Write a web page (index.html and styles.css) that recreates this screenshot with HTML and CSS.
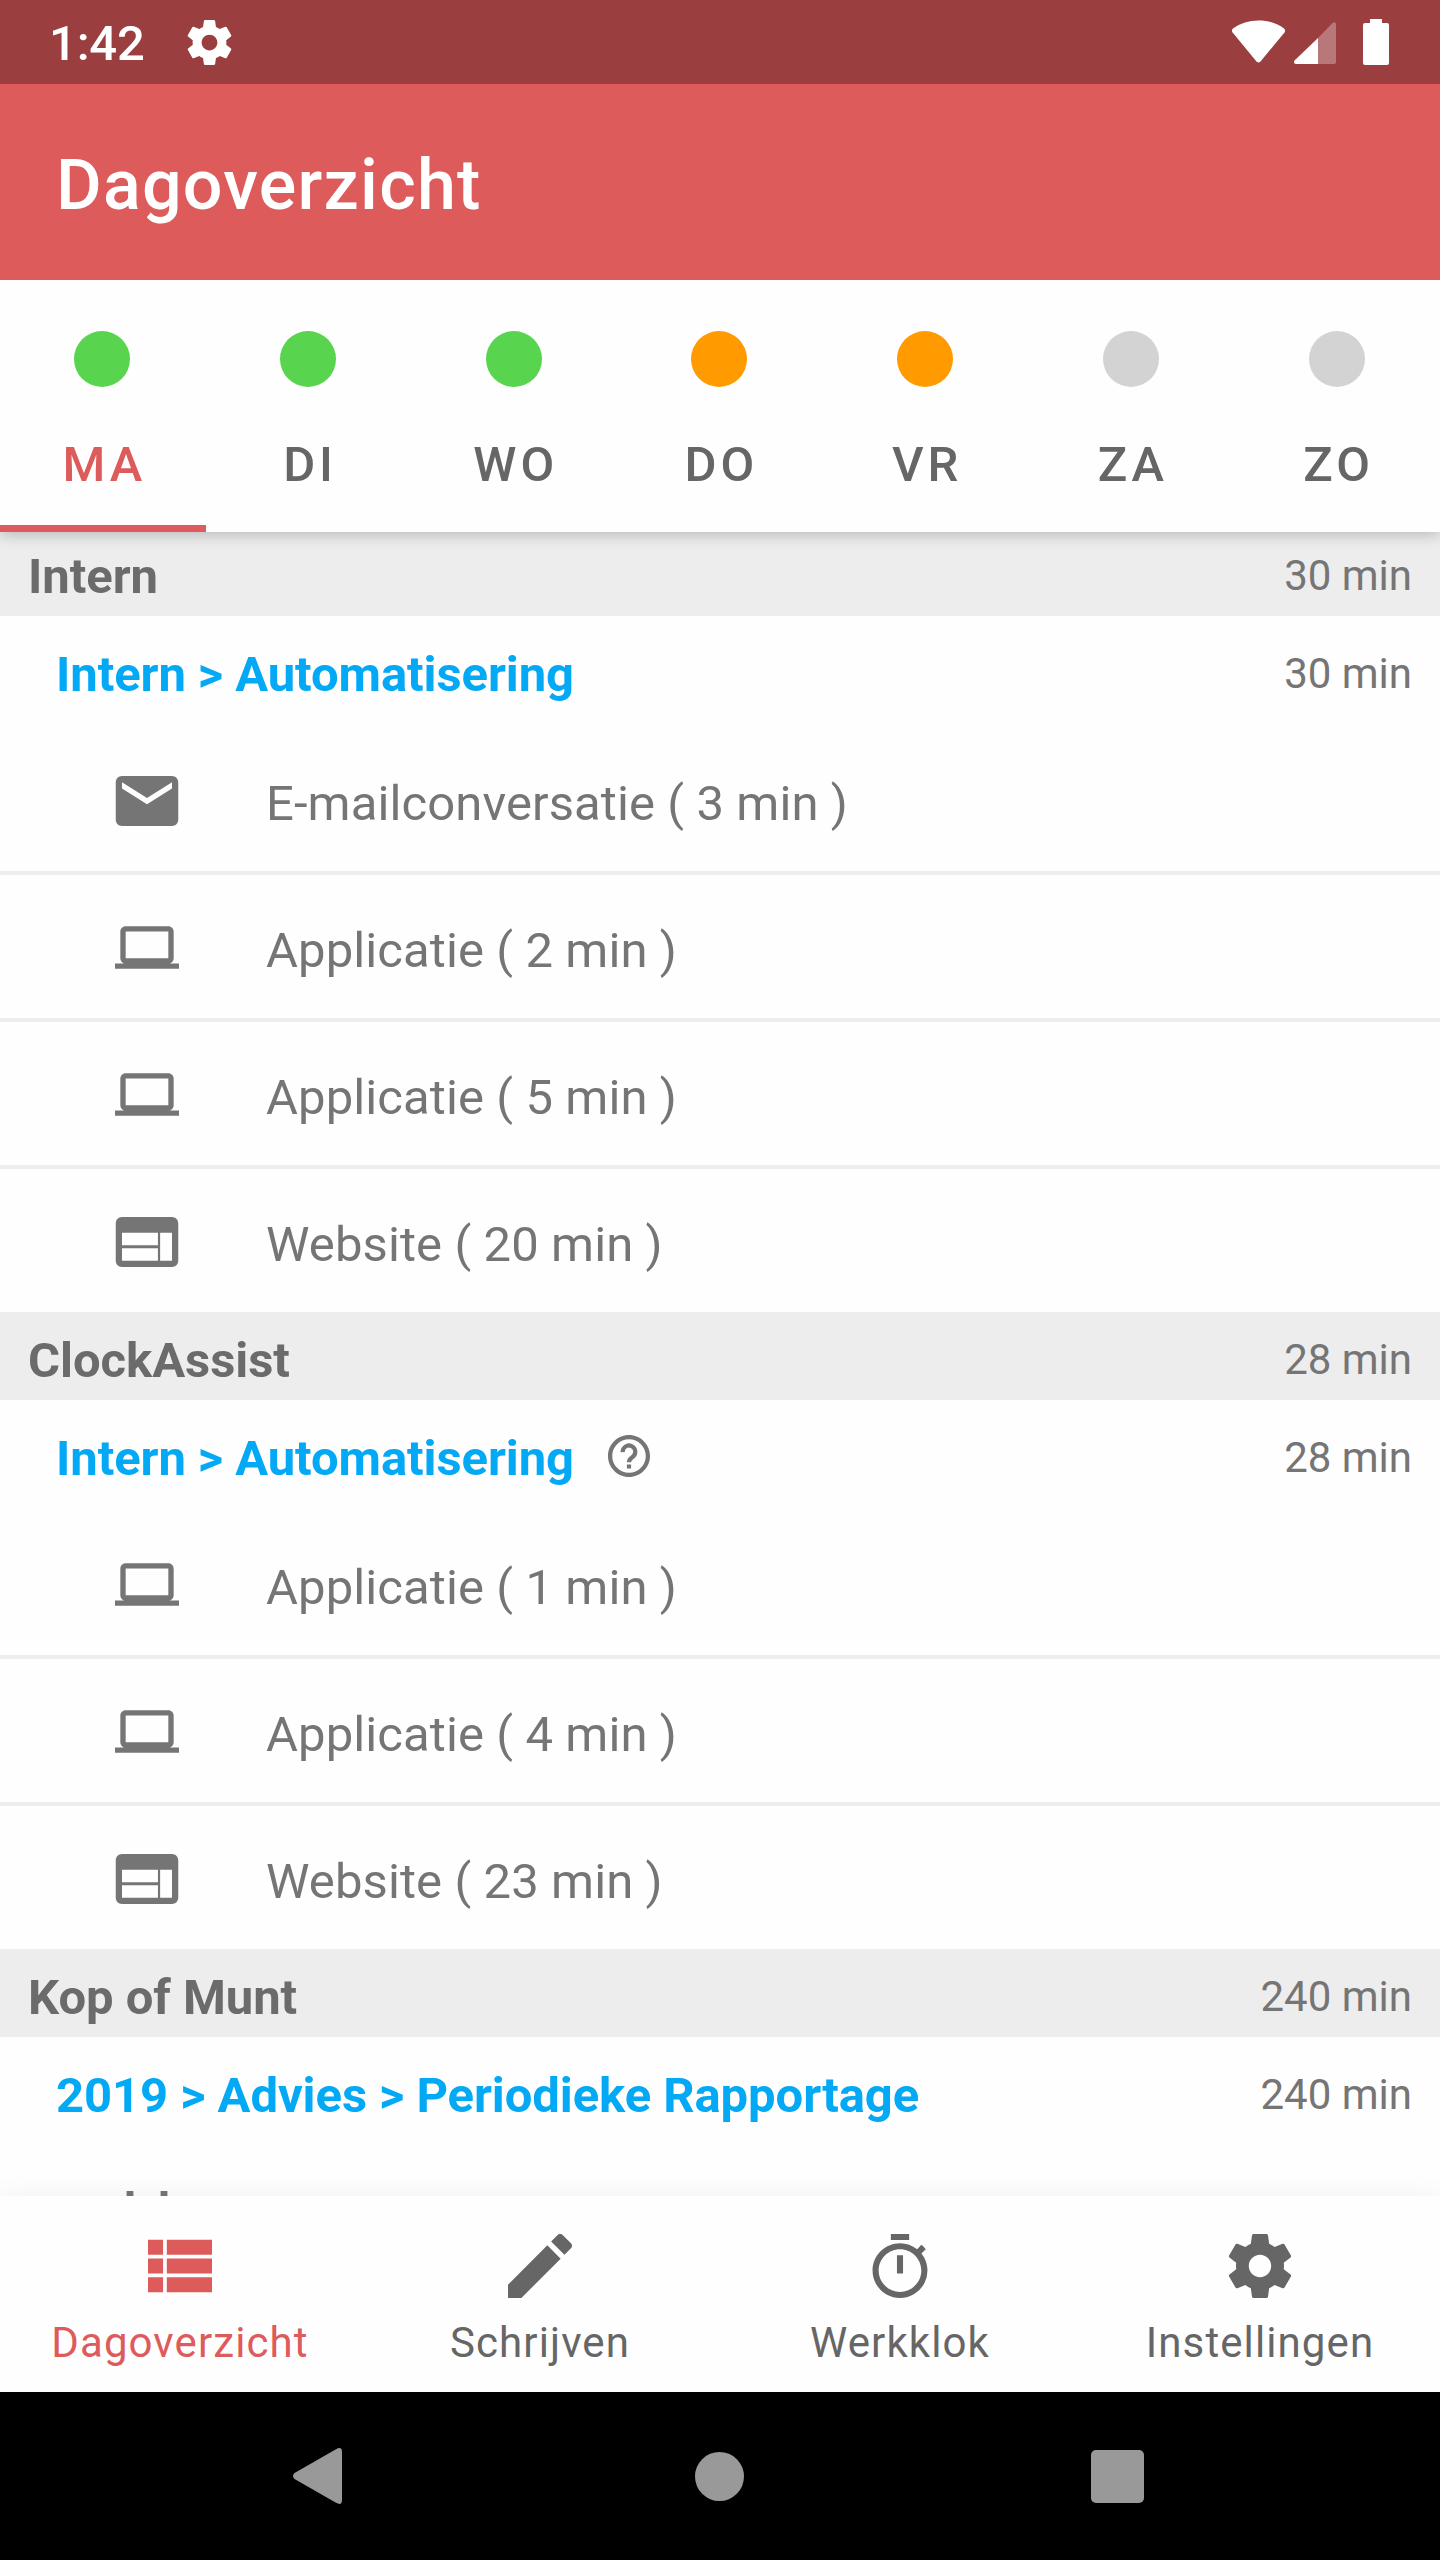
FILE: index.html
```html
<!DOCTYPE html>
<html lang="nl">
<head>
<meta charset="utf-8">
<title>Dagoverzicht</title>
<link rel="stylesheet" href="styles.css">
</head>
<body>
<svg class="sprite" aria-hidden="true">
  <symbol id="gear" viewBox="2 2 20 20"><path d="M19.43 12.98c.04-.32.07-.64.07-.98s-.03-.66-.07-.98l2.11-1.65c.19-.15.24-.42.12-.64l-2-3.46c-.12-.22-.39-.3-.61-.22l-2.49 1c-.52-.4-1.08-.73-1.69-.98l-.38-2.65C14.46 2.18 14.25 2 14 2h-4c-.25 0-.46.18-.49.42l-.38 2.65c-.61.25-1.17.59-1.69.98l-2.49-1c-.23-.09-.49 0-.61.22l-2 3.46c-.13.22-.07.49.12.64l2.11 1.65c-.04.32-.07.65-.07.98s.03.66.07.98l-2.11 1.65c-.19.15-.24.42-.12.64l2 3.46c.12.22.39.3.61.22l2.49-1c.52.4 1.08.73 1.69.98l.38 2.65c.03.24.24.42.49.42h4c.25 0 .46-.18.49-.42l.38-2.65c.61-.25 1.17-.59 1.69-.98l2.49 1c.23.09.49 0 .61-.22l2-3.46c.12-.22.07-.49-.12-.64l-2.11-1.65zM12 15.5c-1.93 0-3.5-1.57-3.5-3.5s1.57-3.5 3.5-3.5 3.5 1.57 3.5 3.5-1.57 3.5-3.5 3.5z"/></symbol>
  <symbol id="mail" viewBox="2 4 20 16"><path d="M20 4H4c-1.1 0-2 .9-2 2v12c0 1.1.9 2 2 2h16c1.1 0 2-.9 2-2V6c0-1.1-.9-2-2-2zm0 4l-8 5-8-5V6l8 5 8-5v2z"/></symbol>
  <symbol id="laptop" viewBox="0 4 24 16"><path d="M20 18c1.1 0 2-.9 2-2V6c0-1.1-.9-2-2-2H4c-1.1 0-2 .9-2 2v10c0 1.1.9 2 2 2H0v2h24v-2h-4zM4 6h16v10H4V6z"/></symbol>
  <symbol id="web" viewBox="2 4 20 16"><path d="M20 4H4c-1.1 0-2 .9-2 2v12c0 1.1.9 2 2 2h16c1.1 0 2-.9 2-2V6c0-1.1-.9-2-2-2zm-4.500 14H4v-4h11.500v4zm0-5H4V9h11.500v4zm4.500 5h-3.800V9H20v9z"/></symbol>
  <symbol id="event" viewBox="3 1 18 20"><path d="M17 12h-5v5h5v-5zM16 1v2H8V1H6v2H5c-1.11 0-2 .9-2 2v14c0 1.1.89 2 2 2h14c1.1 0 2-.9 2-2V5c0-1.1-.9-2-2-2h-1V1h-2zm3 18H5V8h14v11z"/></symbol>
  <symbol id="help" viewBox="2 2 20 20"><path d="M11 18h2v-2h-2v2zm1-16C6.48 2 2 6.48 2 12s4.48 10 10 10 10-4.48 10-10S17.52 2 12 2zm0 18c-4.41 0-8-3.59-8-8s3.59-8 8-8 8 3.59 8 8-3.59 8-8 8z"/><path class="hook" d="M9 10.200a3 3 0 1 1 4.800 2.200Q12 13.600 12 15"/></symbol>
  <symbol id="list" viewBox="4 5 17 14"><path d="M4 14h4v-4H4v4zm0 5h4v-4H4v4zM4 9h4V5H4v4zm5 5h12v-4H9v4zm0 5h12v-4H9v4zM9 5v4h12V5H9z"/></symbol>
  <symbol id="pencil" viewBox="3 3 18 18"><path d="M3 17.250V21h3.750L17.810 9.940l-3.750-3.750L3 17.250zM20.710 7.040c.39-.39.39-1.020 0-1.410l-2.340-2.340c-.39-.39-1.020-.39-1.410 0l-1.830 1.830 3.750 3.750 1.830-1.830z"/></symbol>
  <symbol id="timer" viewBox="1.500 1 21 21"><path d="M15 1H9v2h6V1zm-4 13h2V8h-2v6zm8.030-6.610l1.420-1.420c-.43-.51-.9-.99-1.410-1.410l-1.420 1.420A8.960 8.960 0 0 0 12 4c-4.970 0-9 4.030-9 9s4.020 9 9 9a8.990 8.990 0 0 0 7.030-14.610zM12 20c-3.870 0-7-3.130-7-7s3.130-7 7-7 7 3.130 7 7-3.130 7-7 7z"/></symbol>
</svg>

<header class="statusbar">
  <div class="status-left">
    <span class="time">1:42</span>
    <svg class="status-gear"><use href="#gear"/></svg>
  </div>
  <div class="status-right">
    <svg class="wifi" viewBox="0 0 53 43"><path d="M1 8.500C15-2.300 38-2.300 52 8.500q2 2 .5 4L28.500 41.500q-2 2.200-4 0L.6 12.500q-1.500-2 .4-4z"/></svg>
    <svg class="signal" viewBox="0 0 42 42"><path d="M24 16v26H2q-3-.5-1.500-3.500z"/><path class="dim" d="M24 16L38.500 1Q42-1 42 2.500V40q0 2-2 2H24z"/></svg>
    <svg class="battery" viewBox="0 0 26 46"><path d="M7 0h12v4h5q2 0 2 2v38q0 2-2 2H2q-2 0-2-2V6q0-2 2-2h5z"/></svg>
  </div>
</header>

<div class="appbar"><h1 class="title">Dagoverzicht</h1></div>

<nav class="tabs">
  <div class="tab active"><i class="dot green"></i><span>MA</span></div>
  <div class="tab"><i class="dot green"></i><span>DI</span></div>
  <div class="tab"><i class="dot green"></i><span>WO</span></div>
  <div class="tab"><i class="dot orange"></i><span>DO</span></div>
  <div class="tab"><i class="dot orange"></i><span>VR</span></div>
  <div class="tab"><i class="dot gray"></i><span>ZA</span></div>
  <div class="tab"><i class="dot gray"></i><span>ZO</span></div>
</nav>

<main class="list">
  <section>
    <div class="client"><h2>Intern</h2><span class="min">30 min</span></div>
    <div class="project"><h3>Intern &gt; Automatisering</h3><span class="min">30 min</span></div>
    <div class="item"><svg class="icon"><use href="#mail"/></svg><span>E-mailconversatie ( 3 min )</span></div>
    <div class="item"><svg class="icon laptop"><use href="#laptop"/></svg><span>Applicatie ( 2 min )</span></div>
    <div class="item"><svg class="icon laptop"><use href="#laptop"/></svg><span>Applicatie ( 5 min )</span></div>
    <div class="item"><svg class="icon"><use href="#web"/></svg><span>Website ( 20 min )</span></div>
  </section>
  <section>
    <div class="client"><h2>ClockAssist</h2><span class="min">28 min</span></div>
    <div class="project"><h3>Intern &gt; Automatisering</h3><svg class="help"><use href="#help"/></svg><span class="min">28 min</span></div>
    <div class="item"><svg class="icon laptop"><use href="#laptop"/></svg><span>Applicatie ( 1 min )</span></div>
    <div class="item"><svg class="icon laptop"><use href="#laptop"/></svg><span>Applicatie ( 4 min )</span></div>
    <div class="item"><svg class="icon"><use href="#web"/></svg><span>Website ( 23 min )</span></div>
  </section>
  <section>
    <div class="client"><h2>Kop of Munt</h2><span class="min">240 min</span></div>
    <div class="project"><h3>2019 &gt; Advies &gt; Periodieke Rapportage</h3><span class="min">240 min</span></div>
    <div class="item"><svg class="icon event"><use href="#event"/></svg></div>
  </section>
</main>

<nav class="bottom">
  <div class="dest active"><svg><use href="#list"/></svg><span>Dagoverzicht</span></div>
  <div class="dest"><svg><use href="#pencil"/></svg><span>Schrijven</span></div>
  <div class="dest"><svg><use href="#timer"/></svg><span>Werkklok</span></div>
  <div class="dest"><svg><use href="#gear"/></svg><span>Instellingen</span></div>
</nav>

<footer class="sysnav">
  <svg class="back" viewBox="0 0 49 56"><path d="M1.500 25L43 1.200Q49-2 49 4v48q0 6-6 2.800L1.500 31q-3-3 0-6z"/></svg>
  <i class="home"></i>
  <i class="recent"></i>
</footer>
</body>
</html>
```
FILE: styles.css
```css
* { box-sizing: border-box; }

body {
  margin: 0;
  width: 1440px;
  height: 2560px;
  overflow: hidden;
  display: flex;
  flex-direction: column;
  background: #fefefe;
  font-family: Roboto, "Noto Sans", sans-serif;
  color: #757575;
}

h1, h2, h3 { margin: 0; }
svg { display: block; fill: currentColor; flex: none; }
.sprite { position: absolute; width: 0; height: 0; }

.statusbar {
  flex: none;
  height: 84px;
  display: flex;
  justify-content: space-between;
  align-items: center;
  padding: 0 51px 0 49px;
  background: #9a3e3f;
  color: #fff;
}
.status-left, .status-right { display: flex; align-items: center; }
.time { font-size: 49px; font-weight: 500; letter-spacing: -.2px; line-height: 84px; padding-top: 3px; }
.status-gear { width: 45px; height: 45px; margin-left: 42px; }
.wifi { width: 53px; height: 43px; margin: 0 9px 2px 0; }
.signal { width: 42px; height: 42px; margin: 2px 27px 0 0; }
.signal .dim { opacity: .3; }
.battery { width: 26px; height: 46px; }

.appbar {
  flex: none;
  height: 196px;
  display: flex;
  align-items: center;
  padding: 6px 56px 0;
  background: #de5b5b;
  color: #fff;
  z-index: 2;
}
.title { font-size: 70px; font-weight: 500; letter-spacing: 1.25px; line-height: 82px; }

.tabs {
  flex: none;
  height: 252px;
  display: grid;
  grid-template-columns: repeat(7, 1fr);
  background: #fefefe;
  box-shadow: 0 3px 14px rgba(0, 0, 0, .22);
  z-index: 1;
}
.tab {
  display: flex;
  flex-direction: column;
  align-items: center;
  padding: 51px 1px 0 0;
  font-size: 49px;
  font-weight: 500;
  line-height: 57px;
  letter-spacing: 4px;
  color: #666;
}
.tab.active { color: #de5b5b; border-bottom: 7px solid #de5b5b; }
.tab span { margin-top: 49px; padding-left: 4px; }
.dot { width: 56px; height: 56px; border-radius: 50%; }
.green { background: #58d44e; }
.orange { background: #ff9b00; }
.gray { background: #d3d3d3; }

.list { flex: 1; min-height: 0; overflow: hidden; }
.client {
  height: 84px;
  display: flex;
  align-items: center;
  padding: 4px 28px 0;
  background: #ededed;
}
h2 { font-size: 49px; font-weight: 700; line-height: 57px; letter-spacing: -.05px; color: #6b6b6b; }
h3 { font-size: 49px; font-weight: 700; line-height: 57px; letter-spacing: -.08px; margin-top: 1px; color: #03a9f4; }
.min { margin-left: auto; font-size: 42px; line-height: 50px; }
.project {
  height: 112px;
  display: flex;
  align-items: flex-start;
  padding: 29px 28px 0 56px;
}
.project .min { padding-top: 4px; }
.help { width: 42px; height: 42px; margin: 6px 0 0 34px; }
.hook { fill: none; stroke: currentColor; stroke-width: 2; }
.item {
  height: 147px;
  display: flex;
  align-items: center;
  border-bottom: 4px solid #ededed;
  padding: 4px 0 0 115px;
  font-size: 49px;
  line-height: 57px;
  letter-spacing: .1px;
}
.item span { margin: 4px 0 0 87px; }
.icon { width: 64px; height: 50px; margin-top: -2px; }
.icon.laptop { height: 43px; }
.icon.event { height: 68px; margin-top: 5px; }

.bottom {
  flex: none;
  height: 196px;
  display: grid;
  grid-template-columns: repeat(4, 1fr);
  background: #fefefe;
  box-shadow: 0 4px 28px rgba(0, 0, 0, .08);
}
.dest {
  display: flex;
  flex-direction: column;
  align-items: center;
  padding-top: 38px;
  color: #666;
  font-size: 42px;
  line-height: 50px;
  letter-spacing: 1.1px;
}
.dest svg { width: 64px; height: 64px; }
.dest span { margin-top: 20px; }
.dest.active { color: #de5b5b; }

.sysnav {
  flex: none;
  height: 168px;
  display: flex;
  align-items: center;
  padding-left: 293px;
  background: #000;
  color: #999;
}
.back { width: 49px; height: 56px; }
.home { width: 49px; height: 49px; margin-left: 353px; border-radius: 50%; background: #999; }
.recent { width: 53px; height: 53px; margin-left: 347px; border-radius: 5px; background: #999; }
```
